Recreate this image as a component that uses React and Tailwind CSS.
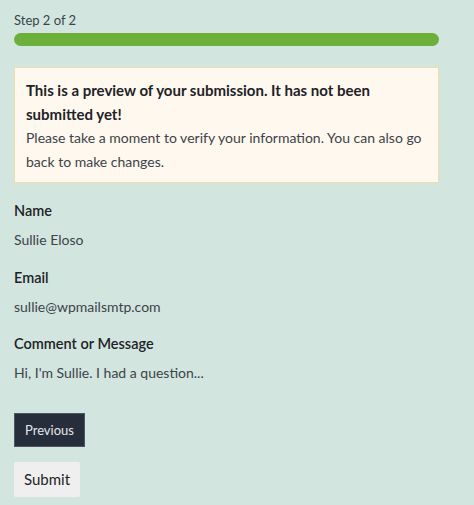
export default function App() {
  return (
    <div className="min-h-[505px] bg-[#d2e5de] px-[14px] pt-[10px] text-[#2c3338]" style={{ fontFamily: 'Lato, "Noto Sans", sans-serif' }}>
      <div className="w-[425px]">
        <div className="text-[13px] leading-[20px] text-[#3c434a]">Step 2 of 2</div>
        <div className="mt-[3px] h-[13px] rounded-full bg-[#6cb03b]" />

        <div className="mt-[21px] border border-[#ecdfa6] bg-[#fff8ee] px-[11px] pb-[8px] pt-[10px] text-[14px] leading-[24px]">
          <p className="text-[15px] font-bold text-[#1d2327]">This is a preview of your submission. It has not been submitted yet!</p>
          <p className="text-[#3c434a]">Please take a moment to verify your information. You can also go back to make changes.</p>
        </div>

        <div className="mt-[16px] flex flex-col text-[14px] leading-[24px]">
          <div className="text-[14.5px] font-semibold text-[#1d2327]">Name</div>
          <div className="mt-[5px] text-[#3c434a]">Sullie Eloso</div>
          <div className="mt-[14px] text-[14.5px] font-semibold text-[#1d2327]">Email</div>
          <div className="mt-[5px] text-[#3c434a]">sullie@wpmailsmtp.com</div>
          <div className="mt-[13px] text-[14.5px] font-semibold text-[#1d2327]">Comment or Message</div>
          <div className="mt-[5px] text-[#3c434a]">Hi, I'm Sullie. I had a question...</div>
        </div>

        <div className="mt-[28px] flex flex-col items-start gap-[15px]">
          <button className="h-[34px] border border-[#4b5563] bg-[#262d3b] px-[10px] text-[13px] leading-[32px] text-[#e5e7eb]">Previous</button>
          <button className="h-[35px] rounded-[2px] bg-[#efefef] px-[10px] text-[15px] text-[#1d2327]">Submit</button>
        </div>
      </div>
    </div>
  )
}
